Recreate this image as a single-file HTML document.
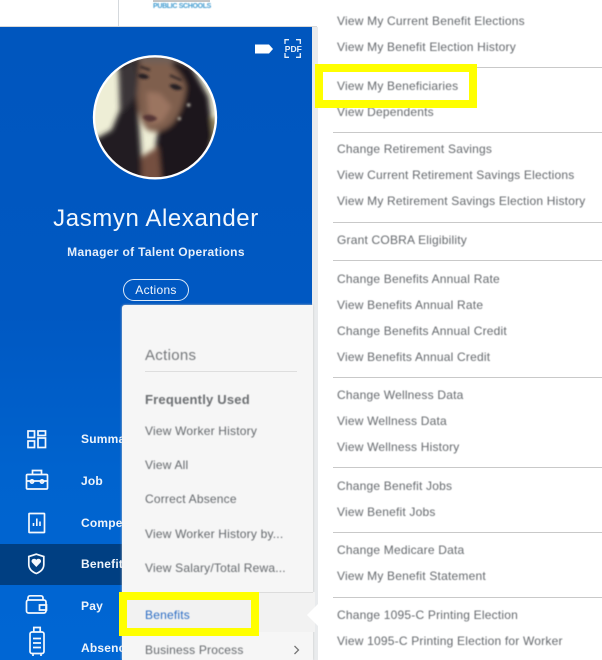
<!DOCTYPE html>
<html><head><meta charset="utf-8"><style>
html,body{margin:0;padding:0;width:602px;height:660px;overflow:hidden;background:#fff}
body{position:relative;font-family:"Liberation Sans",sans-serif}
.a{position:absolute}
.t{position:absolute;white-space:nowrap;font-size:12px;color:#65696d;line-height:14px;filter:blur(.4px)}
.r{left:337px;letter-spacing:.2px}
.l{left:145px;letter-spacing:.2px}
.h{position:absolute;left:333px;width:269px;height:1px;background:#c9c9c9}
.n{position:absolute;left:81px;color:#eef4fb;font-weight:bold;font-size:12px;line-height:14px;white-space:nowrap;filter:blur(.35px);letter-spacing:.2px}
.y{position:absolute;border:8px solid #ffff00;box-sizing:border-box}
</style></head><body>
<div class="a" style="left:118px;top:0;width:1px;height:27px;background:#d5d9dd"></div>
<div class="a" style="left:153px;top:0;width:57px;height:2px;background:#c4c4c4"></div>
<div class="t" style="left:153px;top:3px;font-size:7px;line-height:8px;font-weight:bold;color:#3f9bd0;letter-spacing:-.33px">PUBLIC SCHOOLS</div>
<div class="a" style="left:0;top:26px;width:317px;height:1px;background:#d8d8d8"></div>
<div class="a" style="left:0;top:27px;width:312px;height:633px;background:linear-gradient(#0056be 0,#0058c2 45%,#0063ce 70%,#0066d4 100%)"></div>
<div class="a" style="left:312px;top:27px;width:6px;height:633px;background:#e9ebed"></div>
<div class="a" style="left:318px;top:0;width:284px;height:660px;background:#fff"></div>
<svg class="a" style="left:0;top:0" width="312" height="70" viewBox="0 0 312 70"><path d="M255 44.500h14l4 4.500-4 4.500h-14z" fill="#fff"/><path d="M285 44v-4.300h4M296 39.700h4.300V44M285 53v4.300h4M296 57.300h4.300V53" fill="none" stroke="#e8f0fa" stroke-width="1.300"/><text x="284.800" y="52" font-family="Liberation Sans" font-weight="bold" font-size="8.500" fill="#e8f0fa">PDF</text></svg>
<svg class="a" style="left:90px;top:50px" width="132" height="136" viewBox="0 0 396 408">
<defs><clipPath id="c"><circle cx="195" cy="202" r="182"/></clipPath><filter id="b"><feGaussianBlur stdDeviation="8"/></filter><filter id="s"><feGaussianBlur stdDeviation="4"/></filter></defs>
<g clip-path="url(#c)"><rect width="396" height="408" fill="#eeeed6"/>
<g filter="url(#b)">
<rect x="80" y="0" width="280" height="50" fill="#6f5f56"/>
<path d="M350 200l50 10v70h-60z" fill="#a3946c"/>
<path d="M85 30l65-5-5 170 15 210H20l-10-135 55-30 25-60z" fill="#231f24"/>
<path d="M85 60l50-30 10 100-50 60z" fill="#3b3638"/>
<path d="M250 30l55 20 50 90 15 120-40 140H180l30-200z" fill="#1b171b"/>
<path d="M148 40h85c30 15 50 50 55 70-2 40-20 90-45 115-25 20-50 25-70 15-20-15-30-60-32-100z" fill="#7f5f4e"/>
<path d="M170 125l40 5 35 40-28 45-40 10z" fill="#9b7560"/>
<path d="M155 320l50-30 10 110h-60z" fill="#75503f"/>
</g>
<g filter="url(#s)">
<path d="M142 76c10-8 26-6 36 6-12 8-26 6-36-6zM238 106c10-8 28-4 40 10-14 8-30 4-40-10z" fill="#231e20"/>
<path d="M150 50l30 10M240 76l35 15" stroke="#332826" stroke-width="7" fill="none"/>
<path d="M158 200c12-10 34-6 44 6-14 14-34 12-44-6z" fill="#553434"/>
<circle cx="296" cy="165" r="5" fill="#cfcabc"/><circle cx="268" cy="206" r="5" fill="#b9b3a4"/>
</g></g>
<circle cx="195" cy="202" r="183" fill="none" stroke="#fff" stroke-width="7"/></svg>
<div class="a" style="left:0;top:205px;width:312px;text-align:center;color:#f2f7fd;font-size:24px;line-height:28px;letter-spacing:.6px;filter:blur(.35px)">Jasmyn Alexander</div>
<div class="a" style="left:0;top:245px;width:312px;text-align:center;color:#e6effa;font-size:12px;font-weight:bold;line-height:14px;letter-spacing:.33px;filter:blur(.35px)">Manager of Talent Operations</div>
<div class="a" style="left:123px;top:279px;width:66px;height:22px;box-sizing:border-box;border:1px solid #dbe8f7;border-radius:11px;text-align:center;color:#f2f7fd;font-size:12px;line-height:20px;letter-spacing:.3px;filter:blur(.25px)">Actions</div>
<div class="a" style="left:0;top:544px;width:122px;height:41px;background:#003f82"></div>
<div class="n" style="top:432px">Summa</div><div class="n" style="top:474px">Job</div><div class="n" style="top:516px">Compe</div><div class="n" style="top:557px">Benefit</div><div class="n" style="top:599px">Pay</div><div class="n" style="top:641px">Absenc</div>
<svg class="a" style="left:0;top:420px;filter:blur(.25px)" width="80" height="240" viewBox="0 420 80 240" fill="none" stroke="#f4f8fd" stroke-width="1.700">
<rect x="28" y="431" width="6.500" height="6.500"/><rect x="38" y="431" width="7.500" height="4.500"/><rect x="28" y="441" width="6.500" height="6.500"/><rect x="38" y="438" width="7.500" height="9.500"/>
<rect x="26.500" y="474.500" width="21" height="14.500" rx="1"/><path d="M32.500 474v-3.500h9v3.500M26.500 481h21"/><circle cx="32" cy="481.500" r="1.600"/><circle cx="42" cy="481.500" r="1.600"/>
<rect x="29" y="513.500" width="15.500" height="19" rx=".5"/><path d="M33.500 526v-3M36.800 526v-7.500M40 526v-4.500" stroke-width="1.600"/>
<path d="M36.300 554.200l7.500 2.300v8c0 4.500-3.200 7.300-7.500 9-4.300-1.700-7.500-4.500-7.500-9v-8z"/><path d="M36.300 567l-4.500-4.700c-1.400-3.200 3.200-4.800 4.500-2.300 1.300-2.500 5.900-.9 4.500 2.300z" fill="#f4f8fd" stroke="none"/>
<rect x="26.500" y="600" width="19.500" height="13" rx="2"/><path d="M28 600v-2c0-1.300.8-2.200 2-2.200h11c1.300 0 2 1 2 2.200v2M39.500 605h7v5h-7z"/>
<rect x="30" y="632" width="14" height="21.500" rx="2"/><path d="M33.800 632v-4.500h6.400v4.500M33 638.500h8M33 643h8M33 647.500h8M33 654v2M41 654v2"/>
</svg>
<div class="a" style="left:122px;top:305px;width:191px;height:355px;background:#f6f6f6;border-radius:3px 0 0 0;box-shadow:0 0 2px #c4c4c4"></div>
<div class="a" style="left:123px;top:592px;width:192px;height:40px;background:#f2f2f2"></div>
<div class="a" style="left:122px;top:592px;width:191px;height:1px;background:#dcdcdc"></div>
<svg class="a" style="left:307px;top:604px" width="11" height="22"><path d="M11 0L0 11l11 11z" fill="#fff"/></svg>
<div class="t" style="left:145px;top:347px;font-size:15px;line-height:18px;letter-spacing:.3px;color:#74777a">Actions</div>
<div class="a" style="left:145px;top:371px;width:152px;height:1px;background:#dedede"></div>
<div class="t" style="left:145px;top:392px;font-size:13px;line-height:16px;font-weight:bold;letter-spacing:.2px;color:#6c6f72">Frequently Used</div>
<div class="t l" style="top:424px">View Worker History</div>
<div class="t l" style="top:458px">View All</div>
<div class="t l" style="top:492px">Correct Absence</div>
<div class="t l" style="top:527px">View Worker History by...</div>
<div class="t l" style="top:561px">View Salary/Total Rewa...</div>
<div class="t l" style="top:608px;color:#2a6cc4">Benefits</div>
<div class="t l" style="top:643px">Business Process</div>
<svg class="a" style="left:292px;top:644px" width="10" height="12"><path d="M2.500 2l4 4-4 4" fill="none" stroke="#777" stroke-width="1.300"/></svg>
<div class="y" style="left:119px;top:592px;width:140px;height:44px"></div>
<div class="t r" style="top:13.500px">View My Current Benefit Elections</div>
<div class="t r" style="top:39.500px">View My Benefit Election History</div>
<div class="h" style="top:67px"></div>
<div class="t r" style="top:79px">View My Beneficiaries</div>
<div class="t r" style="top:105px">View Dependents</div>
<div class="h" style="top:132px"></div>
<div class="t r" style="top:142px">Change Retirement Savings</div>
<div class="t r" style="top:168px">View Current Retirement Savings Elections</div>
<div class="t r" style="top:194px">View My Retirement Savings Election History</div>
<div class="h" style="top:222px"></div>
<div class="t r" style="top:233px">Grant COBRA Eligibility</div>
<div class="h" style="top:260px"></div>
<div class="t r" style="top:272px">Change Benefits Annual Rate</div>
<div class="t r" style="top:298px">View Benefits Annual Rate</div>
<div class="t r" style="top:324px">Change Benefits Annual Credit</div>
<div class="t r" style="top:350px">View Benefits Annual Credit</div>
<div class="h" style="top:377px"></div>
<div class="t r" style="top:388px">Change Wellness Data</div>
<div class="t r" style="top:414px">View Wellness Data</div>
<div class="t r" style="top:440px">View Wellness History</div>
<div class="h" style="top:467px"></div>
<div class="t r" style="top:479px">Change Benefit Jobs</div>
<div class="t r" style="top:505px">View Benefit Jobs</div>
<div class="h" style="top:532px"></div>
<div class="t r" style="top:543px">Change Medicare Data</div>
<div class="t r" style="top:569px">View My Benefit Statement</div>
<div class="h" style="top:597px"></div>
<div class="t r" style="top:608px">Change 1095-C Printing Election</div>
<div class="t r" style="top:634px">View 1095-C Printing Election for Worker</div>
<div class="y" style="left:315px;top:64px;width:162px;height:44px"></div>
</body></html>
